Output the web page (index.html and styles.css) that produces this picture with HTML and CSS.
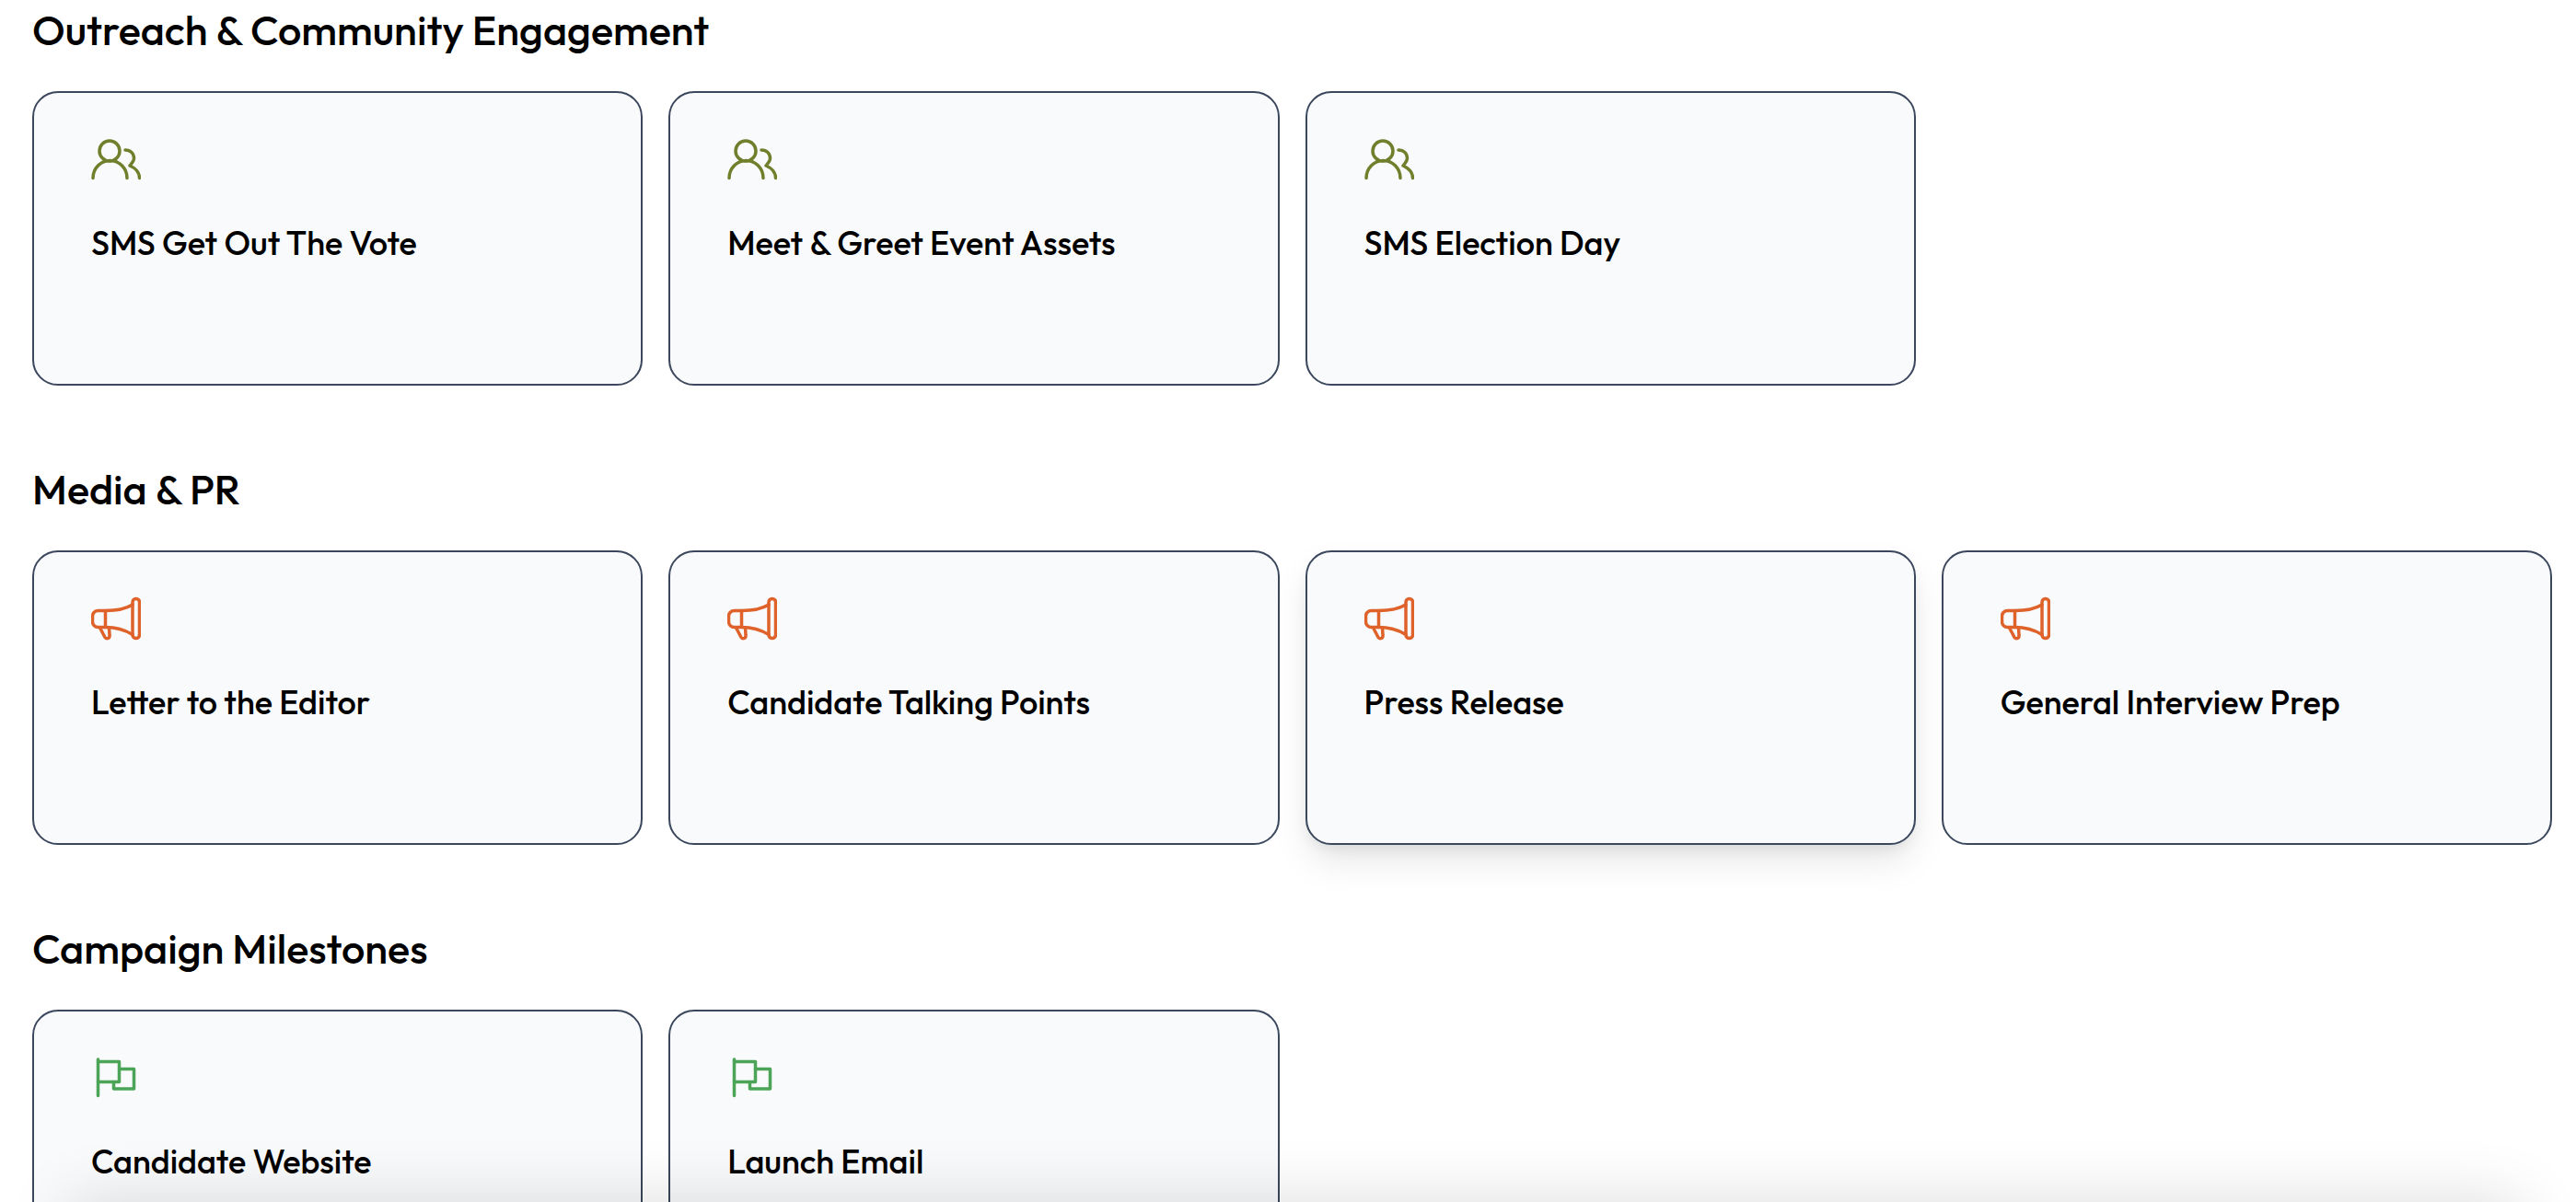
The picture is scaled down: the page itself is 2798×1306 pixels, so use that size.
FILE: index.html
```
<!DOCTYPE html>
<html lang="en">
<head>
  <meta charset="UTF-8">
  <meta name="viewport" content="width=device-width, initial-scale=1">
  <title>Campaign Content</title>
  <link rel="stylesheet" href="styles.css">
</head>
<body>
  <!-- Icons shared by the cards of each category -->
  <svg class="sprite" aria-hidden="true">
    <symbol id="icon-users" viewBox="0 0 54 54">
      <circle cx="20" cy="17" r="11"/>
      <path d="M2 46.500a18 18.500 0 0 1 37 0"/>
      <path d="M37 16c6 0 9.500 4 9.500 9 0 3-2 5-4.500 8 6 2.500 10.500 7.500 10.500 13.500"/>
    </symbol>
    <symbol id="icon-megaphone" viewBox="0 0 54 54">
      <rect x="45" y="4.500" width="7.500" height="43" rx="3.750"/>
      <path d="M45 11C36 16.500 25 17.500 15.500 17.500H7.500a6 6 0 0 0-6 6v6a6 6 0 0 0 6 6h8C25 35.500 36 38 45 43.500"/>
      <path d="M15.500 17.500v18"/>
      <path d="M9.500 36l5.500 10.500c2 2.500 5.500 1 5-2.500L19.500 36"/>
    </symbol>
    <symbol id="icon-flag" viewBox="0 0 54 54">
      <path d="M7.500 6v39.500"/>
      <path d="M7.500 8.500h23v22h-23"/>
      <path d="M30.500 16.500h16v21.500h-22V30.500"/>
    </symbol>
  </svg>

  <main class="content">
    <section class="category outreach">
      <h2 class="category-title">Outreach &amp; Community Engagement</h2>
      <div class="card-grid">
        <button type="button" class="card">
          <svg class="icon" aria-hidden="true"><use href="#icon-users"/></svg>
          <span class="card-title">SMS Get Out The Vote</span>
        </button>
        <button type="button" class="card">
          <svg class="icon" aria-hidden="true"><use href="#icon-users"/></svg>
          <span class="card-title">Meet &amp; Greet Event Assets</span>
        </button>
        <button type="button" class="card">
          <svg class="icon" aria-hidden="true"><use href="#icon-users"/></svg>
          <span class="card-title">SMS Election Day</span>
        </button>
      </div>
    </section>

    <section class="category media">
      <h2 class="category-title">Media &amp; PR</h2>
      <div class="card-grid">
        <button type="button" class="card">
          <svg class="icon" aria-hidden="true"><use href="#icon-megaphone"/></svg>
          <span class="card-title">Letter to the Editor</span>
        </button>
        <button type="button" class="card">
          <svg class="icon" aria-hidden="true"><use href="#icon-megaphone"/></svg>
          <span class="card-title">Candidate Talking Points</span>
        </button>
        <button type="button" class="card active">
          <svg class="icon" aria-hidden="true"><use href="#icon-megaphone"/></svg>
          <span class="card-title">Press Release</span>
        </button>
        <button type="button" class="card">
          <svg class="icon" aria-hidden="true"><use href="#icon-megaphone"/></svg>
          <span class="card-title">General Interview Prep</span>
        </button>
      </div>
    </section>

    <section class="category milestones">
      <h2 class="category-title">Campaign Milestones</h2>
      <div class="card-grid">
        <button type="button" class="card">
          <svg class="icon" aria-hidden="true"><use href="#icon-flag"/></svg>
          <span class="card-title">Candidate Website</span>
        </button>
        <button type="button" class="card">
          <svg class="icon" aria-hidden="true"><use href="#icon-flag"/></svg>
          <span class="card-title">Launch Email</span>
        </button>
      </div>
    </section>
  </main>

  <div class="bottom-shadow"></div>
</body>
</html>
```

FILE: styles.css
```
* {
  box-sizing: border-box;
}
body {
  margin: 0;
  background-color: #fff;
  color: #000;
  font-family: 'Outfit', 'Lato', sans-serif;
}
.sprite {
  display: none;
}
/* The list is cut at the bottom of the window */
.content {
  height: 100vh;
  overflow: hidden;
  padding: 0 26px 0 35px;
}
.category {
  margin-bottom: 80px;
}
.category-title {
  margin: 0 0 33px;
  font-size: 45px;
  font-weight: 500;
  line-height: 66px;
}
.card-grid {
  display: grid;
  grid-template-columns: repeat(4, 1fr);
  gap: 28px;
}
.card {
  display: flex;
  flex-direction: column;
  align-items: flex-start;
  gap: 39px;
  min-height: 320px;
  padding: 46px 62px;
  border: 2px solid #3b475c;
  border-radius: 28px;
  background-color: #f9fafc;
  color: inherit;
  font: inherit;
  text-align: left;
  cursor: pointer;
}
.card:hover,
.card.active {
  box-shadow: 0 20px 40px -4px rgba(0, 0, 0, 0.1), 0 8px 16px -4px rgba(0, 0, 0, 0.08);
}
.card-title {
  font-size: 36px;
  font-weight: 500;
  line-height: 48px;
}
.icon {
  width: 54px;
  height: 54px;
  fill: none;
  stroke: currentColor;
  stroke-width: 3.5;
  stroke-linecap: round;
  stroke-linejoin: round;
  overflow: visible;
}
.outreach .icon {
  color: #6f7f2b;
}
.media .icon {
  color: #de622a;
}
.milestones .icon {
  color: #4ca557;
}
/* Shadow of the panel below the fold */
.bottom-shadow {
  position: fixed;
  top: 100%;
  left: 76px;
  right: 60px;
  height: 100px;
  box-shadow: 0 0 72px rgba(0, 0, 0, 0.14);
}
```
